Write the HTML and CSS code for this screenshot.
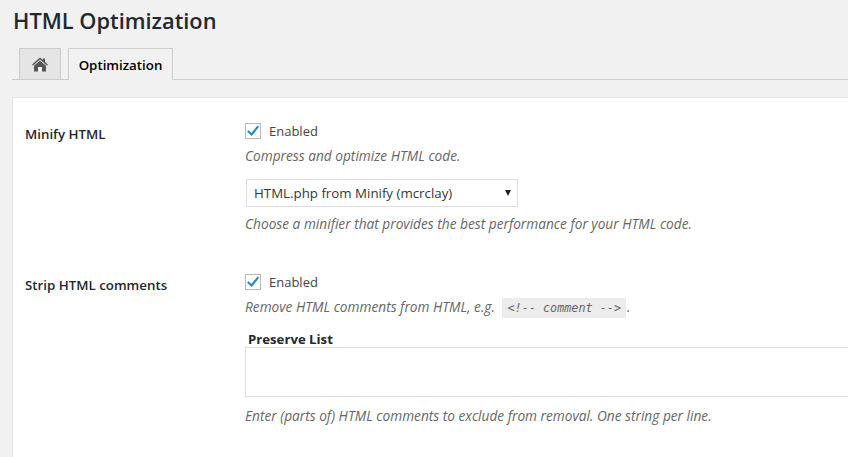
FILE: index.html
```html
<!DOCTYPE html>
<html lang="en">
<head>
    <meta charset="UTF-8">
    <title>HTML Optimization</title>
    <link rel="stylesheet" href="styles.css">
</head>
<body>
    <div class="wrap">
        <h1>HTML Optimization</h1>
        <div class="tabs">
            <a class="tab tab-home" href="#">
                <svg class="home-icon" viewBox="0 0 16 14" width="16" height="15">
                    <path fill="#555" d="M8 0 L11 2.6 V1 H13 V4.4 L16 7 L15 8 L8 2 L1 8 L0 7 Z"/>
                    <path fill="#555" d="M8 3.2 L14 8.3 V14 H9.8 V9.5 H6.2 V14 H2 V8.3 Z"/>
                    <rect fill="#fafafa" x="6.2" y="9.5" width="3.6" height="4.5"/>
                </svg>
            </a>
            <a class="tab tab-active" href="#">Optimization</a>
        </div>
        <div class="panel">
            <div class="row row-minify">
                <div class="row-label">Minify HTML</div>
                <div class="row-field">
                    <label class="check">
                        <span class="checkbox">
                            <svg viewBox="0 0 16 16" width="14" height="14"><path fill="none" stroke="#1e8cbe" stroke-width="2.4" d="M2 8 L6.5 12 L14 2.5"/></svg>
                        </span>
                        Enabled
                    </label>
                    <p class="desc">Compress and optimize HTML code.</p>
                    <div class="select">
                        <span>HTML.php from Minify (mcrclay)</span>
                        <span class="select-arrow"></span>
                    </div>
                    <p class="desc desc-after-select">Choose a minifier that provides the best performance for your HTML code.</p>
                </div>
            </div>
            <div class="row row-strip">
                <div class="row-label">Strip HTML comments</div>
                <div class="row-field">
                    <label class="check">
                        <span class="checkbox">
                            <svg viewBox="0 0 16 16" width="14" height="14"><path fill="none" stroke="#1e8cbe" stroke-width="2.4" d="M2 8 L6.5 12 L14 2.5"/></svg>
                        </span>
                        Enabled
                    </label>
                    <p class="desc">Remove HTML comments from HTML, e.g. <code>&lt;!-- comment --&gt;</code>.</p>
                    <div class="list-title">Preserve List</div>
                    <div class="list-box"></div>
                    <p class="desc">Enter (parts of) HTML comments to exclude from removal. One string per line.</p>
                </div>
            </div>
        </div>
    </div>
</body>
</html>
```

FILE: styles.css
```css
html, body {
    height: 457px;
    overflow: hidden;
}
body {
    margin: 0;
    background: #f1f1f1;
    color: #444;
    font-family: "Open Sans", sans-serif;
    font-size: 13px;
}
.wrap {
    margin-left: 12px;
    padding-top: 6px;
}
h1 {
    margin: 0 0 0 1px;
    font-size: 21.8px;
    font-weight: 600;
    line-height: 30px;
    color: #23282d;
}
.tabs {
    display: flex;
    align-items: flex-end;
    gap: 7px;
    height: 43px;
    padding-left: 7px;
    border-bottom: 1px solid #ccc;
}
.tab {
    display: flex;
    align-items: center;
    justify-content: center;
    box-sizing: border-box;
    height: 31px;
    border: 1px solid #ccc;
    border-bottom: none;
    text-decoration: none;
}
.tab-home {
    width: 42px;
    background: #e5e5e5;
}
.tab-active {
    width: 105px;
    height: 32px;
    margin-bottom: -1px;
    background: #f1f1f1;
    color: #000;
    font-size: 13.3px;
    font-weight: 600;
}
.panel {
    margin-top: 17px;
    background: #fff;
    border: 1px solid #e5e5e5;
    border-right: none;
    border-bottom: none;
    height: 359px;
}
.row {
    display: flex;
    padding-left: 12px;
}
.row-minify {
    padding-top: 23px;
}
.row-strip {
    padding-top: 38px;
}
.row-label {
    width: 220px;
    font-size: 13.3px;
    font-weight: 600;
    color: #23282d;
    line-height: 20px;
    padding-top: 3px;
}
.row-field {
    flex: 1;
}
.check {
    display: flex;
    align-items: center;
    gap: 8px;
    height: 20px;
}
.checkbox {
    box-sizing: border-box;
    width: 16px;
    height: 16px;
    border: 1px solid #b4b9be;
    background: #fff;
    display: flex;
    align-items: center;
    justify-content: center;
}
.checkbox svg {
    flex: none;
}
.desc {
    margin: 5px 0 0;
    font-size: 13.7px;
    font-style: italic;
    color: #666;
    line-height: 20px;
}
.desc-after-select {
    margin-top: 7px;
}
.select {
    box-sizing: border-box;
    display: flex;
    align-items: center;
    justify-content: space-between;
    width: 272px;
    height: 28px;
    margin: 13px 0 0 1px;
    padding: 0 6px 0 7px;
    border: 1px solid #ddd;
    font-size: 13.3px;
    color: #32373c;
}
.select-arrow {
    width: 0;
    height: 0;
    border-left: 3.5px solid transparent;
    border-right: 3.5px solid transparent;
    border-top: 6px solid #222;
}
code {
    display: inline-block;
    margin: 0 1px 0 4px;
    padding: 0 5px;
    background: #ececec;
    font-family: "DejaVu Sans Mono", monospace;
    font-size: 11.8px;
    line-height: 20px;
    color: #666;
}
.list-title {
    margin: 14px 0 0 3px;
    font-size: 13.2px;
    font-weight: 700;
    line-height: 14px;
    color: #23282d;
}
.list-box {
    box-sizing: border-box;
    height: 50px;
    margin-top: 1px;
    background: #fff;
    border: 1px solid #ddd;
    border-right: none;
}
.list-box + .desc {
    margin-top: 9px;
}
```
